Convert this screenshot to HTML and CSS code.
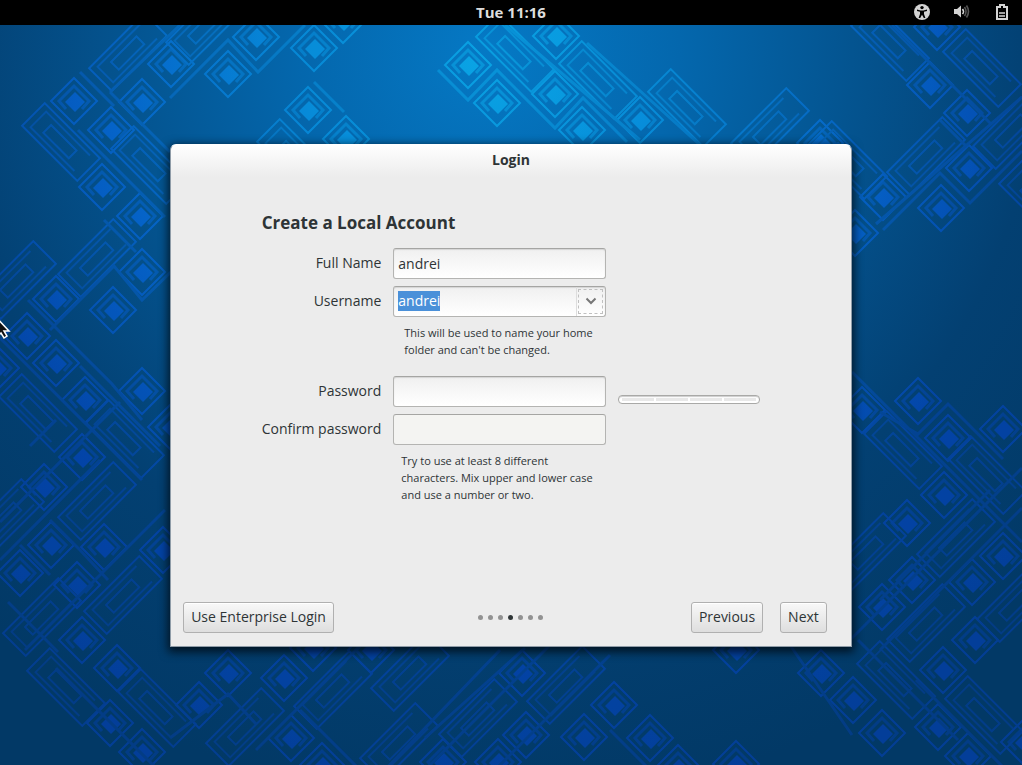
FILE: index.html
```html
<!doctype html>
<html lang="en">
  <head>
    <meta charset="utf-8">
    <title>Login</title>
    <link rel="stylesheet" href="styles.css">
  </head>
  <body>
    <svg class="wallpaper" viewBox="0 0 1022 765" preserveAspectRatio="xMidYMid slice" aria-hidden="true">
      <defs>
        <radialGradient id="base" gradientUnits="userSpaceOnUse" cx="490" cy="50" r="760">
          <stop offset="0" stop-color="#0579c5"/>
          <stop offset="0.25" stop-color="#0467ad"/>
          <stop offset="0.5" stop-color="#04528d"/>
          <stop offset="0.72" stop-color="#034072"/>
          <stop offset="1" stop-color="#023966"/>
        </radialGradient>
        <radialGradient id="ink" gradientUnits="userSpaceOnUse" cx="490" cy="50" r="760">
          <stop offset="0" stop-color="#0cb0ec"/>
          <stop offset="0.25" stop-color="#0893e2"/>
          <stop offset="0.5" stop-color="#0668d6"/>
          <stop offset="0.75" stop-color="#0446b4"/>
          <stop offset="1" stop-color="#0440a4"/>
        </radialGradient>
        <g id="tile">
          <path d="M0-23 23 0 0 23-23 0Z" stroke="#c4c4c4" stroke-width="2"/>
          <path d="M-8 8-15 0 0-15 15 0 8 8" stroke="#888" stroke-width="3"/>
          <path d="M1-9 11 1 1 11-9 1Z" fill="#d0d0d0"/>
        </g>
        <g id="bar" stroke="#b0b0b0" stroke-width="2">
          <path d="M-39-16H39V16H-39Z"/>
          <path d="M30-11H-32V11H30" stroke="#808080"/>
          <path d="M-19-5H17V6H-19Z" stroke="#909090"/>
        </g>
        <g id="down"><use href="#bar" transform="rotate(45)"/></g>
        <g id="up"><use href="#bar" transform="rotate(-45)"/></g>
        <mask id="weave" maskUnits="userSpaceOnUse" x="0" y="0" width="1022" height="765">
          <g fill="none">
            <!-- squares -->
            <use href="#tile" x="74" y="101"/><use href="#tile" x="171" y="64"/>
            <use href="#tile" x="142" y="102"/><use href="#tile" x="228" y="74"/>
            <use href="#tile" x="256" y="37"/><use href="#tile" x="314" y="48"/>
            <use href="#tile" x="343" y="20"/>
            <use href="#tile" x="111" y="130"/><use href="#tile" x="102" y="187"/>
            <use href="#tile" x="140" y="216"/><use href="#tile" x="308" y="110"/>
            <use href="#tile" x="346" y="139"/>
            <use href="#tile" x="468" y="65"/><use href="#tile" x="497" y="103"/>
            <use href="#tile" x="556" y="36"/><use href="#tile" x="555" y="94"/>
            <use href="#tile" x="582" y="130"/><use href="#tile" x="640" y="120"/>
            <use href="#tile" x="937" y="27"/><use href="#tile" x="930" y="85"/>
            <use href="#tile" x="967" y="113"/><use href="#tile" x="969" y="168"/>
            <use href="#tile" x="941" y="208"/><use href="#tile" x="883" y="197"/>
            <use href="#tile" x="820" y="143"/><use href="#tile" x="855" y="233"/>
            <use href="#tile" x="56" y="299"/><use href="#tile" x="142" y="272"/>
            <use href="#tile" x="113" y="310"/><use href="#tile" x="27" y="336"/>
            <use href="#tile" x="56" y="363"/><use href="#tile" x="85" y="400"/>
            <use href="#tile" x="142" y="391"/><use href="#tile" x="171" y="427"/>
            <use href="#tile" x="-4" y="368"/>
            <use href="#tile" x="82" y="457"/><use href="#tile" x="44" y="487"/>
            <use href="#tile" x="51" y="545"/><use href="#tile" x="104" y="547"/>
            <use href="#tile" x="20" y="573"/><use href="#tile" x="77" y="585"/>
            <use href="#tile" x="163" y="550"/><use href="#tile" x="82" y="640"/>
            <use href="#tile" x="117" y="668"/><use href="#tile" x="110" y="723"/>
            <use href="#tile" x="142" y="752"/>
            <use href="#tile" x="862" y="410"/><use href="#tile" x="918" y="401"/>
            <use href="#tile" x="948" y="438"/><use href="#tile" x="1003" y="429"/>
            <use href="#tile" x="944" y="495"/><use href="#tile" x="907" y="523"/>
            <use href="#tile" x="912" y="580"/><use href="#tile" x="882" y="607"/>
            <use href="#tile" x="972" y="582"/><use href="#tile" x="1003" y="556"/>
            <use href="#tile" x="975" y="640"/><use href="#tile" x="943" y="670"/>
            <use href="#tile" x="853" y="700"/><use href="#tile" x="882" y="733"/>
            <use href="#tile" x="938" y="727"/><use href="#tile" x="968" y="756"/>
            <use href="#tile" x="1024" y="742"/>
            <use href="#tile" x="228" y="673"/><use href="#tile" x="284" y="678"/>
            <use href="#tile" x="199" y="705"/><use href="#tile" x="291" y="738"/>
            <use href="#tile" x="313" y="648"/><use href="#tile" x="371" y="650"/>
            <use href="#tile" x="322" y="766"/><use href="#tile" x="522" y="673"/>
            <use href="#tile" x="614" y="705"/><use href="#tile" x="526" y="735"/>
            <use href="#tile" x="584" y="737"/><use href="#tile" x="650" y="738"/>
            <use href="#tile" x="443" y="762"/><use href="#tile" x="498" y="762"/>
            <use href="#tile" x="678" y="768"/><use href="#tile" x="736" y="650"/>
            <use href="#tile" x="736" y="764"/><use href="#tile" x="821" y="673"/>
            <!-- long blocks -->
            <use href="#down" x="61" y="142"/><use href="#up" x="128" y="52"/>
            <use href="#up" x="205" y="26"/><use href="#down" x="150" y="165"/>
            <use href="#up" x="97" y="258"/><use href="#up" x="17" y="280"/>
            <use href="#down" x="296" y="158"/>
            <use href="#down" x="515" y="53"/><use href="#down" x="598" y="80"/>
            <use href="#down" x="687" y="108"/><use href="#up" x="770" y="127"/>
            <use href="#down" x="890" y="42"/><use href="#down" x="982" y="68"/>
            <use href="#up" x="926" y="156"/><use href="#up" x="1012" y="130"/>
            <use href="#down" x="848" y="160"/><use href="#down" x="1038" y="200"/>
            <use href="#down" x="38" y="413"/><use href="#down" x="125" y="439"/>
            <use href="#up" x="97" y="501"/><use href="#up" x="5" y="518"/>
            <use href="#up" x="42" y="617"/><use href="#up" x="123" y="595"/>
            <use href="#down" x="66" y="687"/><use href="#down" x="157" y="708"/>
            <use href="#down" x="903" y="450"/><use href="#down" x="987" y="475"/>
            <use href="#up" x="956" y="538"/><use href="#up" x="867" y="552"/>
            <use href="#up" x="926" y="623"/><use href="#down" x="896" y="680"/>
            <use href="#down" x="984" y="715"/><use href="#up" x="1016" y="603"/>
            <use href="#up" x="333" y="690"/><use href="#up" x="245" y="727"/>
            <use href="#up" x="410" y="672"/><use href="#up" x="566" y="685"/>
            <use href="#up" x="478" y="718"/><use href="#up" x="399" y="742"/>
            <!-- bands between them -->
            <g stroke="#808080" stroke-width="3">
              <path d="M170 98 228 40 258 72 305 25M110 92 180 25M80 72 114 106 M78 130 165 217M110 92 170 152M104 220 136 252"/>
              <path d="M438 70 468 100 497 70 555 128 583 98 627 142M505 25 640 140M587 43 700 145"/>
              <path d="M892 25 990 123M883 230 940 173 970 203 1022 151M876 224 1022 97M940 120 966 146M314 82 344 112"/>
              <path d="M50 330 114 266 142 300 175 268M0 338 142 480M28 300 112 384 142 420M30 446 56 420M0 522 120 402M80 366 160 446"/>
              <path d="M0 560 100 460M20 545 50 575 M25 650 165 510M50 520 80 550 108 580 M56 668 82 694 170 782M8 602 58 652"/>
              <path d="M852 372 1022 542M880 412 918 434 948 404 1003 459M880 600 990 490M850 640 1022 468M880 650 1022 508M858 640 958 740 M916 680 1010 774"/>
              <path d="M170 738 228 694 256 724M256 750 365 641M425 738 525 648M380 775 500 650M420 775 550 645M490 775 610 655M610 730 650 770M300 710 360 770M790 645 852 735"/>
            </g>
          </g>
        </mask>
      </defs>
      <rect width="1022" height="765" fill="url(#base)"/>
      <rect width="1022" height="765" fill="url(#ink)" mask="url(#weave)"/>
    </svg>

    <header class="panel">
      <time class="clock">Tue 11:16</time>
      <div class="status">
        <svg width="16" height="16" viewBox="0 0 16 16" role="img" aria-label="Accessibility">
          <circle cx="8" cy="8" r="8" fill="#d3d3d3"/>
          <circle cx="8" cy="3.6" r="1.7" fill="#000"/>
          <path d="M3 5.6 6.6 6.4H9.4L13 5.6V7L10 7.8V10L11.4 14H9.8L8 10.8 6.2 14H4.6L6 10V7.8L3 7Z" fill="#000"/>
        </svg>
        <svg width="16" height="16" viewBox="0 0 16 16" role="img" aria-label="Volume">
          <path d="M0 5H3L7 1.500V13.500L3 10H0Z" fill="#d3d3d3"/>
          <path d="M8.500 5Q10.500 7.500 8.500 10" fill="none" stroke="#d3d3d3" stroke-width="1.6"/>
          <path d="M10.500 3Q13.500 7.500 10.500 12M12.500 1.500Q16.500 7.500 12.500 13.500" fill="none" stroke="#555" stroke-width="1.6"/>
        </svg>
        <svg width="16" height="16" viewBox="0 0 16 16" role="img" aria-label="Battery">
          <path d="M6 1H10V3H13V15H3V3H6Z" fill="none" stroke="#d3d3d3" stroke-width="2"/>
          <path d="M5 9H11M5 12H11" stroke="#d3d3d3" stroke-width="1.500"/>
        </svg>
      </div>
    </header>

    <main class="desktop">
      <form class="window">
        <h1 class="title">Login</h1>

        <div class="account">
          <h2 class="heading">Create a Local Account</h2>

          <label for="fullname">Full Name</label>
          <input class="entry" type="text" id="fullname" value="andrei">

          <label for="username">Username</label>
          <div class="entry combo">
            <input type="text" id="username" value="andrei">
            <button type="button" aria-label="Suggestions">
              <svg width="12" height="8" viewBox="0 0 12 8"><path d="M1.500 1.500 6 6 10.500 1.500" fill="none" stroke="#777" stroke-width="2"/></svg>
            </button>
          </div>
          <p class="hint hint-username">This will be used to name your home folder and can't be changed.</p>

          <label for="password">Password</label>
          <input class="entry" type="password" id="password">
          <meter class="strength" min="0" max="4" value="0" aria-label="Password strength"></meter>

          <label for="confirm">Confirm password</label>
          <input class="entry" type="password" id="confirm" disabled>
          <p class="hint">Try to use at least 8 different characters. Mix upper and lower case and use a number or two.</p>
        </div>

        <footer class="actions">
          <button class="btn" type="button">Use Enterprise Login</button>
          <div class="pages">
            <i></i><i></i><i></i><i class="current"></i><i></i><i></i><i></i>
          </div>
          <div class="nav">
            <button class="btn" type="button">Previous</button>
            <button class="btn" type="submit">Next</button>
          </div>
        </footer>
      </form>
    </main>

    <svg class="pointer" width="11" height="20" viewBox="0 0 11 20" aria-hidden="true">
      <path d="M-5-4 9 11 4 11 7 16 4 18 1 13-3 17Z" fill="#111" stroke="#fff" stroke-width="1.500"/>
    </svg>

    <script>
      const username = document.querySelector('#username');

      username.focus();
      username.select();
    </script>
  </body>
</html>
```
FILE: styles.css
```css
* {
  box-sizing: border-box;
}

body {
  display: flex;
  flex-direction: column;
  min-height: 100vh;
  margin: 0;
  background: #000;
  color: #2e3436;
  font: 14px/20px "Open Sans", "Noto Sans", sans-serif;
}

input, button {
  font: inherit;
  color: inherit;
}

.wallpaper {
  position: absolute;
  top: 0;
  left: 0;
  z-index: -1;
  width: 100%;
  height: 100%;
}

.panel {
  display: grid;
  grid-template-columns: 1fr auto 1fr;
  align-items: center;
  height: 25px;
  padding: 0 12px 2px;
  background: #000;
  color: #ddd;
}

.clock {
  grid-column: 2;
  font-size: 15px;
  font-weight: bold;
}

.status {
  display: flex;
  justify-content: flex-end;
  gap: 24px;
}

.desktop {
  flex: 1;
  display: flex;
  align-items: center;
  justify-content: center;
}

.window {
  display: flex;
  flex-direction: column;
  width: 66.7%;
  min-width: 600px;
  border: 1px solid #8f9ca8;
  border-top-color: #fff;
  border-radius: 6px 6px 0 0;
  background: linear-gradient(#fff, #ececec 32px);
  box-shadow: 0 3px 10px 2px rgba(0, 0, 0, 0.7);
}

.title {
  margin: 0;
  padding: 5px;
  font-size: 14px;
  line-height: 20px;
  text-align: center;
}

.account {
  display: grid;
  grid-template-columns: auto 213px 142px;
  gap: 7px 12px;
  align-items: center;
  justify-content: center;
  padding: 36px 0 99px;
}

.heading {
  grid-column: 1 / -1;
  margin: 0 0 6px;
  font-size: 17px;
  line-height: 24px;
}

.account label {
  grid-column: 1;
  text-align: right;
}

.entry {
  width: 100%;
  height: 31px;
  padding: 0 4px;
  border: 1px solid #b4b4b2;
  border-top-color: #a5a5a3;
  border-radius: 3px;
  background: linear-gradient(#f0f0f0, #fff);
  box-shadow: inset 0 1px 1px #d4d4d4;
  outline: none;
}

.entry:disabled {
  background: #f4f4f2;
  box-shadow: none;
}

.combo {
  display: flex;
  padding-right: 0;
}

.combo input {
  flex: 1;
  min-width: 0;
  padding: 0;
  border: 0;
  background: none;
  outline: none;
}

.combo input::selection {
  background: #4a90d9;
  color: #fff;
}

.combo button {
  display: flex;
  align-items: center;
  justify-content: center;
  width: 29px;
  padding: 0;
  border: 0;
  border-left: 1px solid #ddd;
  background: none;
  outline: 1px dashed #c0c0c0;
  outline-offset: -3px;
}

.hint {
  grid-column: 2;
  margin: 0;
  padding-left: 8px;
  font-size: 11px;
  line-height: 17px;
}

.hint-username {
  margin-bottom: 11px;
  padding-left: 11px;
}

.strength {
  appearance: none;
  align-self: end;
  width: 100%;
  height: 9px;
  margin-bottom: 3px;
  padding: 2px 3px;
  border: 1px solid #a9a9a7;
  border-radius: 4px;
  background: #fff;
  box-shadow: inset 0 1px 1px #ccc;
}

.strength::-webkit-meter-inner-element {
  appearance: none;
}

.strength::-webkit-meter-bar {
  height: 3px;
  border: 0;
  border-radius: 0;
  background: repeating-linear-gradient(90deg, #e8e8e8 0 32px, #fff 32px 34px);
}

.actions {
  display: grid;
  grid-template-columns: 1fr auto 1fr;
  align-items: center;
  padding: 0 12px 13px;
}

.btn {
  justify-self: start;
  height: 31px;
  padding: 0 7px;
  border: 1px solid #b0b0b0;
  border-radius: 3px;
  background: linear-gradient(#f8f8f8, #dedede);
  box-shadow: inset 0 1px #fff;
}

.pages {
  display: flex;
  gap: 5px;
}

.pages i {
  width: 5px;
  height: 5px;
  border-radius: 50%;
  background: #929292;
}

.pages .current {
  background: #2e3436;
}

.nav {
  display: flex;
  justify-content: flex-end;
  gap: 17px;
  padding-right: 12px;
}

.pointer {
  position: absolute;
  top: 320px;
  left: 0;
}
```
